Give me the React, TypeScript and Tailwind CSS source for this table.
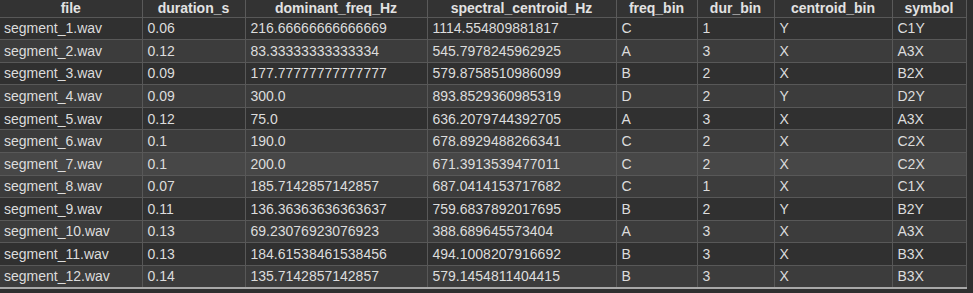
const columns = [
  { key: "file", width: 142 },
  { key: "duration_s", width: 103 },
  { key: "dominant_freq_Hz", width: 182 },
  { key: "spectral_centroid_Hz", width: 189 },
  { key: "freq_bin", width: 81 },
  { key: "dur_bin", width: 77 },
  { key: "centroid_bin", width: 118 },
  { key: "symbol", width: 74 },
];

const rows: string[][] = [
  ["segment_1.wav", "0.06", "216.66666666666669", "1114.554809881817", "C", "1", "Y", "C1Y"],
  ["segment_2.wav", "0.12", "83.33333333333334", "545.7978245962925", "A", "3", "X", "A3X"],
  ["segment_3.wav", "0.09", "177.77777777777777", "579.8758510986099", "B", "2", "X", "B2X"],
  ["segment_4.wav", "0.09", "300.0", "893.8529360985319", "D", "2", "Y", "D2Y"],
  ["segment_5.wav", "0.12", "75.0", "636.2079744392705", "A", "3", "X", "A3X"],
  ["segment_6.wav", "0.1", "190.0", "678.8929488266341", "C", "2", "X", "C2X"],
  ["segment_7.wav", "0.1", "200.0", "671.3913539477011", "C", "2", "X", "C2X"],
  ["segment_8.wav", "0.07", "185.7142857142857", "687.0414153717682", "C", "1", "X", "C1X"],
  ["segment_9.wav", "0.11", "136.36363636363637", "759.6837892017695", "B", "2", "Y", "B2Y"],
  ["segment_10.wav", "0.13", "69.23076923076923", "388.689645573404", "A", "3", "X", "A3X"],
  ["segment_11.wav", "0.13", "184.61538461538456", "494.1008207916692", "B", "3", "X", "B3X"],
  ["segment_12.wav", "0.14", "135.7142857142857", "579.1454811404415", "B", "3", "X", "B3X"],
];

export default function App() {
  return (
    <div className="w-[973px] h-[293px] bg-[#2f2f2f] text-[#dcdcdc] font-['Liberation_Sans',Arial,sans-serif] overflow-hidden">
      <table className="border-collapse table-fixed w-[966px] text-[14px] leading-none">
        <colgroup>
          {columns.map((c) => (
            <col key={c.key} style={{ width: c.width }} />
          ))}
        </colgroup>
        <thead>
          <tr className="h-[17px] bg-[#333333] border-b border-[#a8a8a8]">
            {columns.map((c) => (
              <th
                key={c.key}
                className="font-bold text-center p-0 border-x border-[#5a5a5a] first:border-l-0 text-[#e2e2e2]"
              >
                {c.key}
              </th>
            ))}
          </tr>
        </thead>
        <tbody className="border-b-2 border-[#a8a8a8]">
          {rows.map((r, i) => {
            // row 7 shows the hover highlight in the screenshot
            const bg = i === 6 ? "bg-[#474747]" : i % 2 === 0 ? "bg-[#303030]" : "bg-[#3c3c3c]";
            return (
              <tr key={r[0]} className={`h-[22.58px] ${bg}`}>
                {r.map((v, j) => (
                  <td
                    key={j}
                    className="px-[5px] first:pl-[4px] py-0 border border-[#585858] first:border-l-0 whitespace-nowrap"
                  >
                    {v}
                  </td>
                ))}
              </tr>
            );
          })}
        </tbody>
      </table>
    </div>
  );
}
